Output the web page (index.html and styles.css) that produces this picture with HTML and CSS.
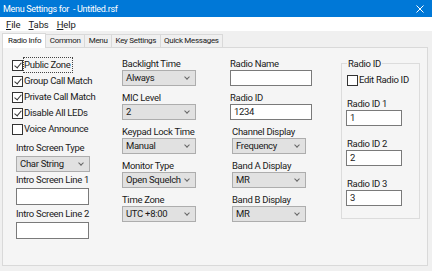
FILE: index.html
```html
<!DOCTYPE html>
<html lang="en">
<head>
  <meta charset="UTF-8">
  <title>Menu Settings</title>
  <link rel="stylesheet" href="styles.css">
</head>
<body>
  <div class="window">
    <div class="titlebar">
      <span class="title">Menu Settings for&nbsp; - Untitled.rsf</span>
      <svg class="close" width="8" height="8" viewBox="0 0 8 8"><path d="M0.5 0.5 L7.5 7.5 M7.5 0.5 L0.5 7.5" stroke="#fff" stroke-width="1"/></svg>
    </div>
    <div class="menubar">
      <span><u>F</u>ile</span>
      <span><u>T</u>abs</span>
      <span><u>H</u>elp</span>
    </div>
    <div class="tabs">
      <div class="tab active">Radio Info</div>
      <div class="tab">Common</div>
      <div class="tab">Menu</div>
      <div class="tab">Key Settings</div>
      <div class="tab">Quick Messages</div>
    </div>
    <div class="panel">
      <div class="col col1">
        <label class="check focus"><span class="box on"></span><span class="ctext">Public Zone</span></label>
        <label class="check"><span class="box on"></span><span class="ctext">Group Call Match</span></label>
        <label class="check"><span class="box on"></span><span class="ctext">Private Call Match</span></label>
        <label class="check"><span class="box on"></span><span class="ctext">Disable All LEDs</span></label>
        <label class="check"><span class="box"></span><span class="ctext">Voice Announce</span></label>
        <div class="field first">
          <div class="lbl">Intro Screen Type</div>
          <div class="select">Char String</div>
        </div>
        <div class="field">
          <div class="lbl">Intro Screen Line 1</div>
          <div class="input"></div>
        </div>
        <div class="field">
          <div class="lbl">Intro Screen Line 2</div>
          <div class="input"></div>
        </div>
      </div>

      <div class="col col2">
        <div class="field"><div class="lbl">Backlight Time</div><div class="select">Always</div></div>
        <div class="field"><div class="lbl">MIC Level</div><div class="select">2</div></div>
        <div class="field"><div class="lbl">Keypad Lock Time</div><div class="select">Manual</div></div>
        <div class="field"><div class="lbl">Monitor Type</div><div class="select">Open Squelch</div></div>
        <div class="field"><div class="lbl">Time Zone</div><div class="select">UTC +8:00</div></div>
      </div>

      <div class="col col3">
        <div class="field"><div class="lbl">Radio Name</div><div class="input wide"></div></div>
        <div class="field"><div class="lbl">Radio ID</div><div class="input wide">1234</div></div>
        <div class="field shift"><div class="lbl">Channel Display</div><div class="select">Frequency</div></div>
        <div class="field shift"><div class="lbl">Band A Display</div><div class="select">MR</div></div>
        <div class="field shift"><div class="lbl">Band B Display</div><div class="select">MR</div></div>
      </div>

      <fieldset class="group">
        <legend>Radio ID</legend>
        <label class="check"><span class="box"></span><span class="ctext">Edit Radio ID</span></label>
        <div class="field"><div class="lbl">Radio ID 1</div><div class="input small">1</div></div>
        <div class="field"><div class="lbl">Radio ID 2</div><div class="input small">2</div></div>
        <div class="field"><div class="lbl">Radio ID 3</div><div class="input small">3</div></div>
      </fieldset>
    </div>
  </div>
</body>
</html>
```

FILE: styles.css
```css
body {
  margin: 0;
  font-family: Roboto, "Liberation Sans", Arial, sans-serif;
  font-size: 9.5px;
  letter-spacing: -0.3px;
  color: #1a1a1a;
  background: #f0f0f0;
}
.window {
  width: 432px;
  height: 271px;
  background: #f0f0f0;
  overflow: hidden;
}
.titlebar {
  height: 17px;
  background: #0078d7;
  color: #fff;
  display: flex;
  align-items: center;
  justify-content: space-between;
  padding: 0 8px 0 3px;
  font-size: 9px;
}
.close {
  display: block;
}
.menubar {
  height: 14px;
  background: #fff;
  display: flex;
  align-items: center;
  gap: 8px;
  padding-left: 6px;
  font-size: 9.5px;
  letter-spacing: -0.1px;
}
.tabs {
  height: 16px;
  display: flex;
  align-items: flex-end;
  padding-left: 2px;
  font-size: 8px;
  letter-spacing: -0.3px;
}
.tab {
  height: 12px;
  line-height: 12px;
  padding: 0 3.5px;
  border: 1px solid #d9d9d9;
  border-bottom: none;
  margin-left: -1px;
  background: #f0f0f0;
}
.tab.active {
  height: 14px;
  line-height: 13px;
  padding: 0 4px 0 5px;
  margin-left: 0;
  background: #fff;
  position: relative;
  z-index: 1;
  margin-bottom: -1px;
}
.panel {
  height: 219px;
  margin: 0 4px 0 2px;
  border: 1px solid #d9d9d9;
  background: #f5f5f5;
  display: flex;
  box-sizing: border-box;
}
.col {
  display: flex;
  flex-direction: column;
}
.col1 {
  width: 110px;
  padding: 9px 0 0 9px;
}
.col2 {
  width: 108px;
  padding-top: 9px;
}
.col3 {
  width: 111px;
  padding-top: 9px;
}
.check {
  display: flex;
  align-items: center;
  height: 16px;
  white-space: nowrap;
}
.box {
  flex-shrink: 0;
  width: 11px;
  height: 11px;
  margin-right: 1px;
  border: 1px solid #333;
  background: #fff;
  box-sizing: border-box;
  position: relative;
}
.box.on::after {
  content: "";
  position: absolute;
  left: 3px;
  top: 0;
  width: 3px;
  height: 6px;
  border: solid #333;
  border-width: 0 1px 1px 0;
  transform: rotate(40deg);
}
.ctext {
  padding: 1px 1px 2px 0;
}
.focus .ctext {
  outline: 1px dotted #444;
  outline-offset: 0;
}
.field {
  margin-bottom: 5px;
}
.col1 .field {
  margin-left: 4px;
  margin-bottom: 0;
}
.col1 .field.first {
  margin-top: 4px;
}
.col1 .lbl {
  height: 14px;
  line-height: 14px;
  margin-bottom: 1px;
}
.col1 .select {
  margin-bottom: 1px;
}
.col1 .input {
  height: 17px;
  margin-bottom: 2px;
}
.field.shift {
  margin-left: 2px;
}
.lbl {
  height: 13px;
  line-height: 13px;
  white-space: nowrap;
}
.select {
  width: 74px;
  height: 16px;
  line-height: 14px;
  box-sizing: border-box;
  border: 1px solid #adadad;
  background: #e1e1e1;
  padding: 0 3px;
  position: relative;
  white-space: nowrap;
  overflow: hidden;
}
.select::after {
  content: "";
  position: absolute;
  right: 6px;
  top: 4px;
  width: 3px;
  height: 3px;
  border: solid #666;
  border-width: 0 1px 1px 0;
  transform: rotate(45deg);
}
.input {
  width: 73px;
  height: 16px;
  line-height: 14px;
  box-sizing: border-box;
  border: 1px solid #7a7a7a;
  background: #fff;
  padding: 0 3px;
}
.input.wide {
  width: 82px;
}
.input.small {
  width: 56px;
}
.group {
  margin: 9px 0 0 0;
  width: 79px;
  height: 162px;
  box-sizing: border-box;
  border: 1px solid #dcdcdc;
  padding: 1px 4px 0 5px;
  min-width: 0;
}
.group legend {
  padding: 0 1px;
  margin-left: 0;
  line-height: 13px;
}
.group .check {
  margin: 1px 0 9px;
}
.group .field {
  margin: 0 0 11px -1px;
}
.group .lbl {
  margin-left: 1px;
}
```
